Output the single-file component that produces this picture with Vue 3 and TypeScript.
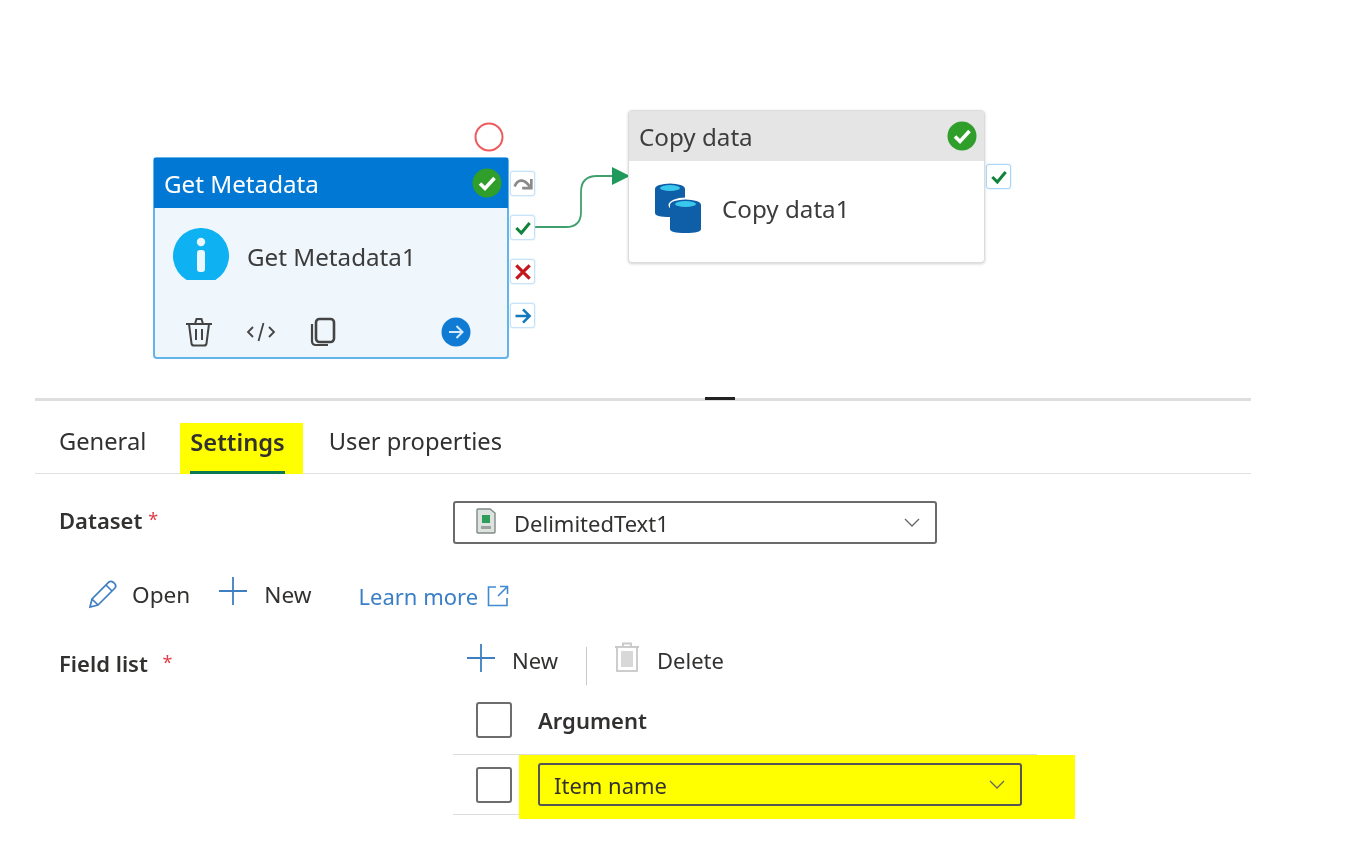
<script setup lang="ts">
const tabs: { label: string; active?: boolean }[] = [
  { label: 'General' },
  { label: 'Settings', active: true },
  { label: 'User properties' },
]
</script>

<template>
  <div class="page">
    <section class="canvas">
      <svg class="wires" width="1358" height="397" viewBox="0 0 1358 397">
        <circle cx="489" cy="137" r="13.5" fill="none" stroke="#ef5a5f" stroke-width="2" />
        <path d="M534 227H566Q581 227 581 212V192Q581 176 597 176H614" fill="none" stroke="#3fa06e" stroke-width="1.8" />
        <path d="M612 167L630 176L612 185Z" fill="#1f9a5c" />
      </svg>

      <article class="node node-meta">
        <header class="node-head">
          <span>Get Metadata</span>
          <svg class="status" viewBox="0 0 30 30"><circle cx="15" cy="15" r="14.5" fill="#2f9e2b" /><path d="M8 15.5l5 5L22.5 10" fill="none" stroke="#fff" stroke-width="3.6" /></svg>
        </header>
        <div class="node-body">
          <svg class="node-icon" viewBox="0 0 56 56">
            <path d="M13.6 52A28 28 0 1 1 42.4 52Z" fill="#0eb1f2" />
            <circle cx="28" cy="14" r="4.2" fill="#eaf7fe" />
            <rect x="24" y="22" width="8" height="22" rx="3" fill="#eaf7fe" />
          </svg>
          <span>Get Metadata1</span>
        </div>
        <footer class="node-actions">
          <svg class="act act-trash" viewBox="0 0 28 30"><path d="M1 7H27M10 7L11.5 2H16.5L18 7M4 7L6.5 26.5Q6.8 28.5 9 28.5H19Q21.2 28.5 21.5 26.5L24 7M11 12V23M17 12V23" fill="none" stroke="#444" stroke-width="2" /></svg>
          <svg class="act act-code" viewBox="0 0 30 24"><path d="M7 7L2 12L7 17M23 7L28 12L23 17M17.5 3L12.5 21" fill="none" stroke="#444" stroke-width="1.8" /></svg>
          <svg class="act act-copy" viewBox="0 0 28 30"><rect x="7" y="2" width="18" height="23" rx="3.5" fill="none" stroke="#444" stroke-width="2.6" /><path d="M3 7V24Q3 28 7 28H19" fill="none" stroke="#444" stroke-width="2.2" /></svg>
          <svg class="act act-go" viewBox="0 0 30 30"><circle cx="15" cy="15" r="14.5" fill="#0f7bd3" /><path d="M8 15H21M15.5 9L21.5 15L15.5 21" fill="none" stroke="#d5ebfb" stroke-width="2" /></svg>
        </footer>
        <div class="ports">
          <span class="port"><svg viewBox="0 0 24 24"><path d="M2 15Q5 7 11 8Q16 9 20 15M22 6V17H11" fill="none" stroke="#8a8a8a" stroke-width="3.2" /></svg></span>
          <span class="port"><svg viewBox="0 0 24 24"><path d="M4 12L10 18L20 6" fill="none" stroke="#10833a" stroke-width="3.6" /></svg></span>
          <span class="port"><svg viewBox="0 0 24 24"><path d="M4 4L20 20M20 4L4 20" fill="none" stroke="#c4161c" stroke-width="3.8" /></svg></span>
          <span class="port"><svg viewBox="0 0 24 24"><path d="M3 12H20M12 4L20 12L12 20" fill="none" stroke="#1279be" stroke-width="3" /></svg></span>
        </div>
      </article>

      <article class="node node-copy">
        <header class="node-head">
          <span>Copy data</span>
          <svg class="status" viewBox="0 0 30 30"><circle cx="15" cy="15" r="14.5" fill="#2f9e2b" /><path d="M8 15.5l5 5L22.5 10" fill="none" stroke="#fff" stroke-width="3.6" /></svg>
        </header>
        <div class="node-body">
          <svg class="db-icon" viewBox="0 0 46 50">
            <path d="M0 6V30Q0 34 15 34Q30 34 30 30V6Z" fill="#0f5ea8" />
            <ellipse cx="15" cy="6" rx="15" ry="5.5" fill="#0f5ea8" />
            <ellipse cx="15" cy="5" rx="10" ry="3" fill="#39c8ec" />
            <ellipse cx="30.5" cy="22" rx="17" ry="7.5" fill="#fff" />
            <path d="M15 22V46Q15 50 30.5 50Q46 50 46 46V22Z" fill="#0f5ea8" />
            <ellipse cx="30.5" cy="22" rx="15.5" ry="5.5" fill="#0f5ea8" />
            <ellipse cx="30.5" cy="21" rx="10.5" ry="3" fill="#39c8ec" />
          </svg>
          <span>Copy data1</span>
        </div>
        <span class="port port-copy"><svg viewBox="0 0 24 24"><path d="M4 12L10 18L20 6" fill="none" stroke="#10833a" stroke-width="3.6" /></svg></span>
      </article>
    </section>

    <section class="panel">
      <div class="split"><i></i></div>

      <nav class="tabs">
        <span v-for="t in tabs" :key="t.label" class="tab" :class="{ active: t.active }"><b>{{ t.label }}</b></span>
      </nav>

      <div class="form-row dataset-row">
        <label class="field-label">Dataset <em>*</em></label>
        <div class="select">
          <svg class="file-icon" viewBox="0 0 20 26">
            <path d="M2 1H14L19 5V24Q19 25 18 25H2Q1 25 1 24V2Q1 1 2 1Z" fill="#dfe3e0" stroke="#7f8a85" stroke-width="1.4" />
            <rect x="6" y="7" width="8" height="8" fill="#2f9e5c" />
            <rect x="5" y="18" width="10" height="3" fill="#9aa39e" />
          </svg>
          <span class="select-text">DelimitedText1</span>
          <svg class="chev" viewBox="0 0 16 9"><path d="M1 1L8 8L15 1" fill="none" stroke="#666" stroke-width="1.3" /></svg>
        </div>
      </div>

      <div class="tools main-tools">
        <span class="tool tool-open">
          <svg class="pencil" viewBox="0 0 30 30"><path d="M2 28L4 20L21 3Q23 1.5 25.5 3.5L27 5Q28.5 7 27 9L10 26ZM4 20L10 26M18 6L24 12" fill="none" stroke="#3f7fc1" stroke-width="1.7" /></svg>
          Open
        </span>
        <span class="tool tool-new">
          <svg class="plus" viewBox="0 0 28 28"><path d="M14 0V28M0 14H28" stroke="#3f7fc1" stroke-width="1.8" /></svg>
          New
        </span>
        <a class="learn">Learn more
          <svg class="ext" viewBox="0 0 22 22"><path d="M9 2H1.5V20.5H20V13M13 1.5H20.5V9M20 2L11 11" fill="none" stroke="#3f8ad0" stroke-width="1.6" /></svg>
        </a>
      </div>

      <div class="form-row field-row">
        <label class="field-label">Field list <em>*</em></label>
        <div class="field-table">
          <div class="tools list-tools">
            <span class="tool tool-add">
              <svg class="plus" viewBox="0 0 28 28"><path d="M14 0V28M0 14H28" stroke="#3f7fc1" stroke-width="1.8" /></svg>
              New
            </span>
            <i class="divider"></i>
            <span class="tool tool-delete">
              <svg class="bin" viewBox="0 0 26 30"><path d="M1 5H25M9 5V1.5H17V5" fill="none" stroke="#c8c8c8" stroke-width="1.8" /><rect x="3" y="5" width="20" height="24" fill="#fff" stroke="#c8c8c8" stroke-width="1.8" /><rect x="7" y="9" width="12" height="16" fill="#d8d8d8" /></svg>
              Delete
            </span>
          </div>
          <div class="t-row t-head">
            <span class="check"></span>
            <strong>Argument</strong>
          </div>
          <div class="t-row t-body">
            <span class="hilite"></span>
            <span class="check"></span>
            <div class="select select-row">
              <span class="select-text">Item name</span>
              <svg class="chev" viewBox="0 0 16 9"><path d="M1 1L8 8L15 1" fill="none" stroke="#666" stroke-width="1.3" /></svg>
            </div>
          </div>
        </div>
      </div>
    </section>
  </div>
</template>

<style scoped>
.page {
  width: 1358px;
  height: 861px;
  overflow: hidden;
  background: #fff;
  color: #323130;
  font-family: "Noto Sans", "Open Sans", sans-serif;
  font-size: 22px;
  filter: blur(0.45px);
}
.canvas { position: relative; height: 397px; }
.wires { position: absolute; left: 0; top: 0; }
.node {
  position: absolute;
  box-sizing: border-box;
  display: flex;
  flex-direction: column;
  border-radius: 4px;
  font-size: 24.2px;
}
.node-meta {
  left: 153px; top: 157px; width: 356px; height: 202px;
  background: #eff6fc;
  border: 2px solid #62b4ea;
}
.node-copy {
  left: 628px; top: 110px; width: 357px; height: 153px;
  background: #fff;
  border: 1px solid #dcdcdc;
  box-shadow: 0 1px 3px rgba(0,0,0,.18);
}
.node-head {
  height: 50px;
  flex: none;
  display: flex;
  align-items: center;
  justify-content: space-between;
  padding: 0 7px 0 10px;
}
.node-meta .node-head { background: #0078d4; color: #fff; margin: -1px -1px 0; padding-right: 6px; }
.node-copy .node-head { background: #e5e5e5; color: #3d3d3d; padding-right: 7px; }
.status { width: 30px; height: 30px; }
.node-body {
  display: flex;
  align-items: center;
  color: #3c3c3c;
}
.node-meta .node-body { padding: 20px 0 0 18px; gap: 18px; }
.node-copy .node-body { padding: 22px 0 0 26px; gap: 21px; }
.node-icon { width: 56px; height: 56px; }
.db-icon { width: 46px; height: 50px; }
.node-actions {
  margin-top: auto;
  height: 50px;
  display: flex;
  align-items: center;
  padding: 6px 36px 0 30px;
}
.act { flex: none; }
.act-trash { width: 28px; height: 30px; }
.act-code { width: 30px; height: 24px; margin-left: 33px; }
.act-copy { width: 28px; height: 30px; margin-left: 33px; }
.act-go { width: 30px; height: 30px; margin-left: auto; }
.ports {
  position: absolute;
  left: 355px;
  top: 12px;
  display: flex;
  flex-direction: column;
  gap: 19px;
}
.port {
  box-sizing: border-box;
  width: 25px;
  height: 25px;
  display: flex;
  align-items: center;
  justify-content: center;
  background: #fff;
  border: 1.5px solid #c8e3f8;
  border-radius: 3px;
  box-shadow: 0 0 2px #bcdcf5;
}
.port svg { width: 20px; height: 20px; }
.port-copy { position: absolute; left: 357px; top: 53px; border-color: #a9d6f7; }

.panel { margin: 0 107px 0 35px; }
.split {
  position: relative;
  height: 3px;
  margin-top: 1px;
  background: #dedede;
}
.split i {
  position: absolute;
  left: 670px; top: -1px;
  width: 30px; height: 3px;
  background: #222;
}
.tabs {
  display: flex;
  height: 73px;
  padding: 8px 0 0 24px;
  box-sizing: border-box;
  border-bottom: 1.5px solid #e0e0e0;
  font-size: 23.7px;
}
.tab { display: flex; align-items: center; }
.tab b { font-weight: 400; }
.tab.active {
  position: relative;
  margin: 14px 26px -1px 34px;
  padding: 0 18px 14px 10px;
  background: #ffff00;
}
.tab.active b { font-weight: 600; }
.tab.active::after {
  content: "";
  position: absolute;
  left: 10px; right: 18px; bottom: 0;
  height: 3px;
  background: #0b7a53;
}
.form-row { display: grid; grid-template-columns: 394px 1fr; padding-left: 24px; }
.field-label { font-weight: 600; line-height: 30px; }
.field-label em {
  color: #e0404a;
  font-style: normal;
  font-weight: 400;
  font-size: 18px;
  vertical-align: 3px;
}
.dataset-row { margin-top: 27px; align-items: center; }
.dataset-row .field-label { margin-top: -6px; }
.select {
  box-sizing: border-box;
  height: 43px;
  width: 484px;
  display: flex;
  align-items: center;
  background: #fff;
  border: 2px solid #6b6b6b;
  border-radius: 3px;
  padding: 0 15px 0 21px;
}
.file-icon { width: 20px; height: 26px; margin-right: 18px; margin-top: -4px; }
.chev { width: 16px; height: 9px; margin-left: auto; }
.tools { display: flex; align-items: center; }
.tool { display: flex; align-items: center; }
.main-tools { margin: 33px 0 0 53px; height: 34px; font-size: 22.6px; }
.pencil { width: 30px; height: 30px; margin-right: 14px; }
.plus { width: 28px; height: 28px; margin-right: 17px; }
.tool-new { margin-left: 29px; }
.tool-new .plus { margin-top: -6px; }
.learn { margin-left: 47px; color: #3a7fc6; display: flex; align-items: center; gap: 9px; margin-top: 4px; font-size: 22px; }
.ext { width: 22px; height: 22px; }
.field-row { margin-top: 33px; }
.field-row .field-label { margin-top: 3px; }
.field-row .field-label em { margin-left: 9px; }
.field-table { width: 584px; }
.list-tools { height: 38px; padding-left: 14px; }
.divider { width: 1px; height: 38px; background: #c9c9c9; margin: 6px 27px 0 28px; }
.bin { width: 26px; height: 30px; margin-right: 17px; margin-top: -6px; }
.tool-delete { margin-top: -6px; }
.tool-add { margin-top: -6px; }
.tool-add .plus { margin-top: -4px; }
.t-row {
  position: relative;
  display: flex;
  align-items: center;
  padding-left: 23px;
}
.t-head { height: 68px; margin-top: 4px; }
.t-head strong { font-weight: 600; margin-left: 26px; }
.t-body {
  height: 59px;
  border-top: 1.5px solid #dcdcdc;
  border-bottom: 1.5px solid #dcdcdc;
}
.check {
  position: relative;
  box-sizing: border-box;
  width: 36px; height: 36px;
  flex: none;
  background: #fff;
  border: 2px solid #6d6d6d;
  border-radius: 3px;
}
.hilite {
  position: absolute;
  left: 66px; top: 0;
  width: 556px; height: 64px;
  background: #ffff00;
}
.select-row {
  position: relative;
  background: #ffff00;
  border-color: #555;
  margin-left: 26px;
  padding-left: 14px;
}
</style>

<style>
html, body { margin: 0; background: #fff; }
</style>
